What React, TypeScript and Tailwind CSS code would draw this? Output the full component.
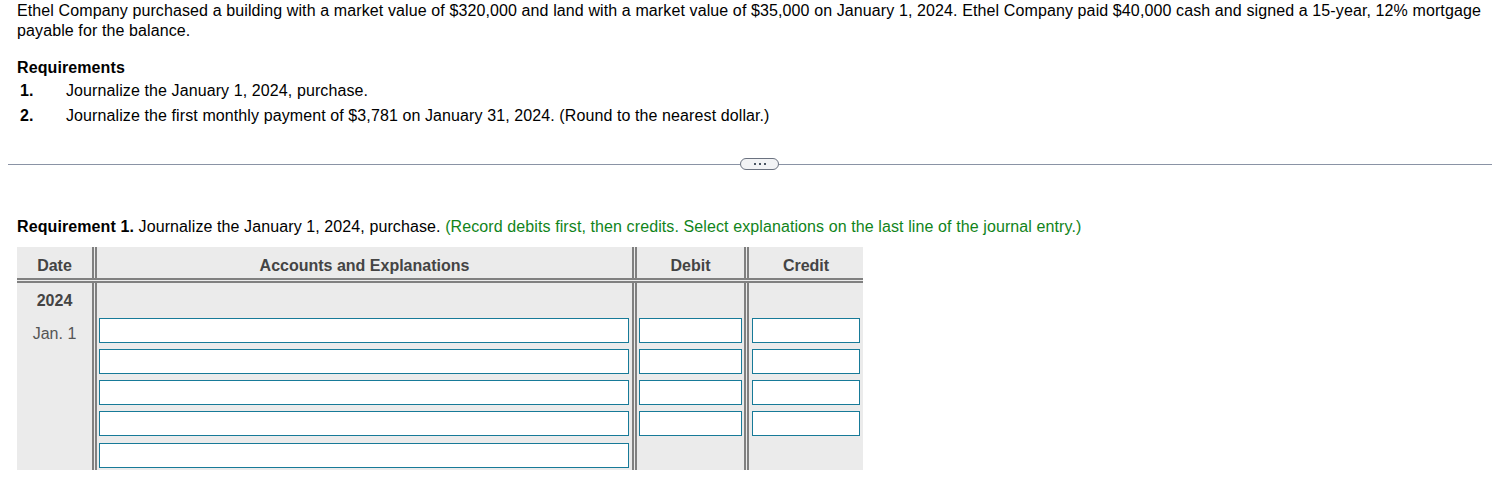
import React from 'react';

const Box = ({ w, extra = '' }: { w: string; extra?: string }) => (
  <div className={`h-[25px] ${w} border border-[#177a98] bg-white ${extra}`} />
);

export default function App() {
  const accRows = [0, 1, 2, 3, 4];
  const amtRows = [0, 1, 2, 3];

  return (
    <div className="font-['Liberation_Sans',Arial,sans-serif] text-[16px] text-black bg-white min-h-[497px]">
      {/* Problem text */}
      <p className="px-[17px] pt-[1px] pr-[8px] leading-[20px] tracking-[0.11px]">
        Ethel Company purchased a building with a market value of $320,000 and land with a market value of $35,000 on January 1, 2024. Ethel Company paid $40,000 cash and signed a 15-year, 12% mortgage payable for the balance.
      </p>

      <div className="px-[17px] mt-[17px] tracking-[0.1px]">
        <div className="font-bold leading-[20px]">Requirements</div>
        <div className="flex leading-[25px]">
          <span className="w-[49px] pl-[3px] font-bold">1.</span>
          <span>Journalize the January 1, 2024, purchase.</span>
        </div>
        <div className="flex leading-[25px]">
          <span className="w-[49px] pl-[3px] font-bold">2.</span>
          <span>Journalize the first monthly payment of $3,781 on January 31, 2024. (Round to the nearest dollar.)</span>
        </div>
      </div>

      {/* Separator */}
      <div className="mt-[30px] flex items-center h-[12px] pl-[8px]">
        <div className="w-[732px] h-px bg-[#8a93a5]" />
        <div className="w-[39px] h-[12px] rounded-full border border-[#6b7280] bg-[#f2f3f5] flex items-center justify-center gap-[3px]">
          <span className="w-[2px] h-[2px] bg-[#4b5563]" />
          <span className="w-[2px] h-[2px] bg-[#4b5563]" />
          <span className="w-[2px] h-[2px] bg-[#4b5563]" />
        </div>
        <div className="flex-1 h-px bg-[#8a93a5]" />
      </div>

      {/* Requirement 1 */}
      <div className="px-[17px] mt-[47px] leading-[20px] tracking-[0.1px]">
        <span className="font-bold">Requirement 1.</span> Journalize the January 1, 2024, purchase.{' '}
        <span className="text-[#11841a]">(Record debits first, then credits. Select explanations on the last line of the journal entry.)</span>
      </div>

      {/* Journal table */}
      <div className="ml-[17px] mt-[10px] w-[846px] bg-[#ebebeb] text-[#444444]">
        <div className="flex h-[36px] border-b-[5px] border-double border-[#808080] font-bold">
          <div className="w-[80px] border-r-[5px] border-double border-[#808080] flex items-center justify-center pt-[6px]">Date</div>
          <div className="w-[540px] border-r-[5px] border-double border-[#808080] flex items-center justify-center pt-[6px]">Accounts and Explanations</div>
          <div className="w-[112px] border-r-[5px] border-double border-[#808080] flex items-center justify-center pt-[6px]">Debit</div>
          <div className="flex-1 flex items-center justify-center pt-[6px]">Credit</div>
        </div>
        <div className="flex h-[187px]">
          <div className="w-[80px] border-r-[5px] border-double border-[#808080] text-center pt-[8px] leading-[20px]">
            <div className="font-bold">2024</div>
            <div className="mt-[13px] text-[#555555]">Jan. 1</div>
          </div>
          <div className="w-[540px] border-r-[5px] border-double border-[#808080] pl-[2px] pt-[35px] flex flex-col gap-[6px]">
            {accRows.map(i => <Box key={i} w="w-[530px]" extra={i === 4 ? 'mt-[1px]' : ''} />)}
          </div>
          <div className="w-[112px] border-r-[5px] border-double border-[#808080] pl-[2px] pt-[35px] flex flex-col gap-[6px]">
            {amtRows.map(i => <Box key={i} w="w-[103px]" />)}
          </div>
          <div className="flex-1 pl-[3px] pt-[35px] flex flex-col gap-[6px]">
            {amtRows.map(i => <Box key={i} w="w-[108px]" />)}
          </div>
        </div>
      </div>
    </div>
  );
}
